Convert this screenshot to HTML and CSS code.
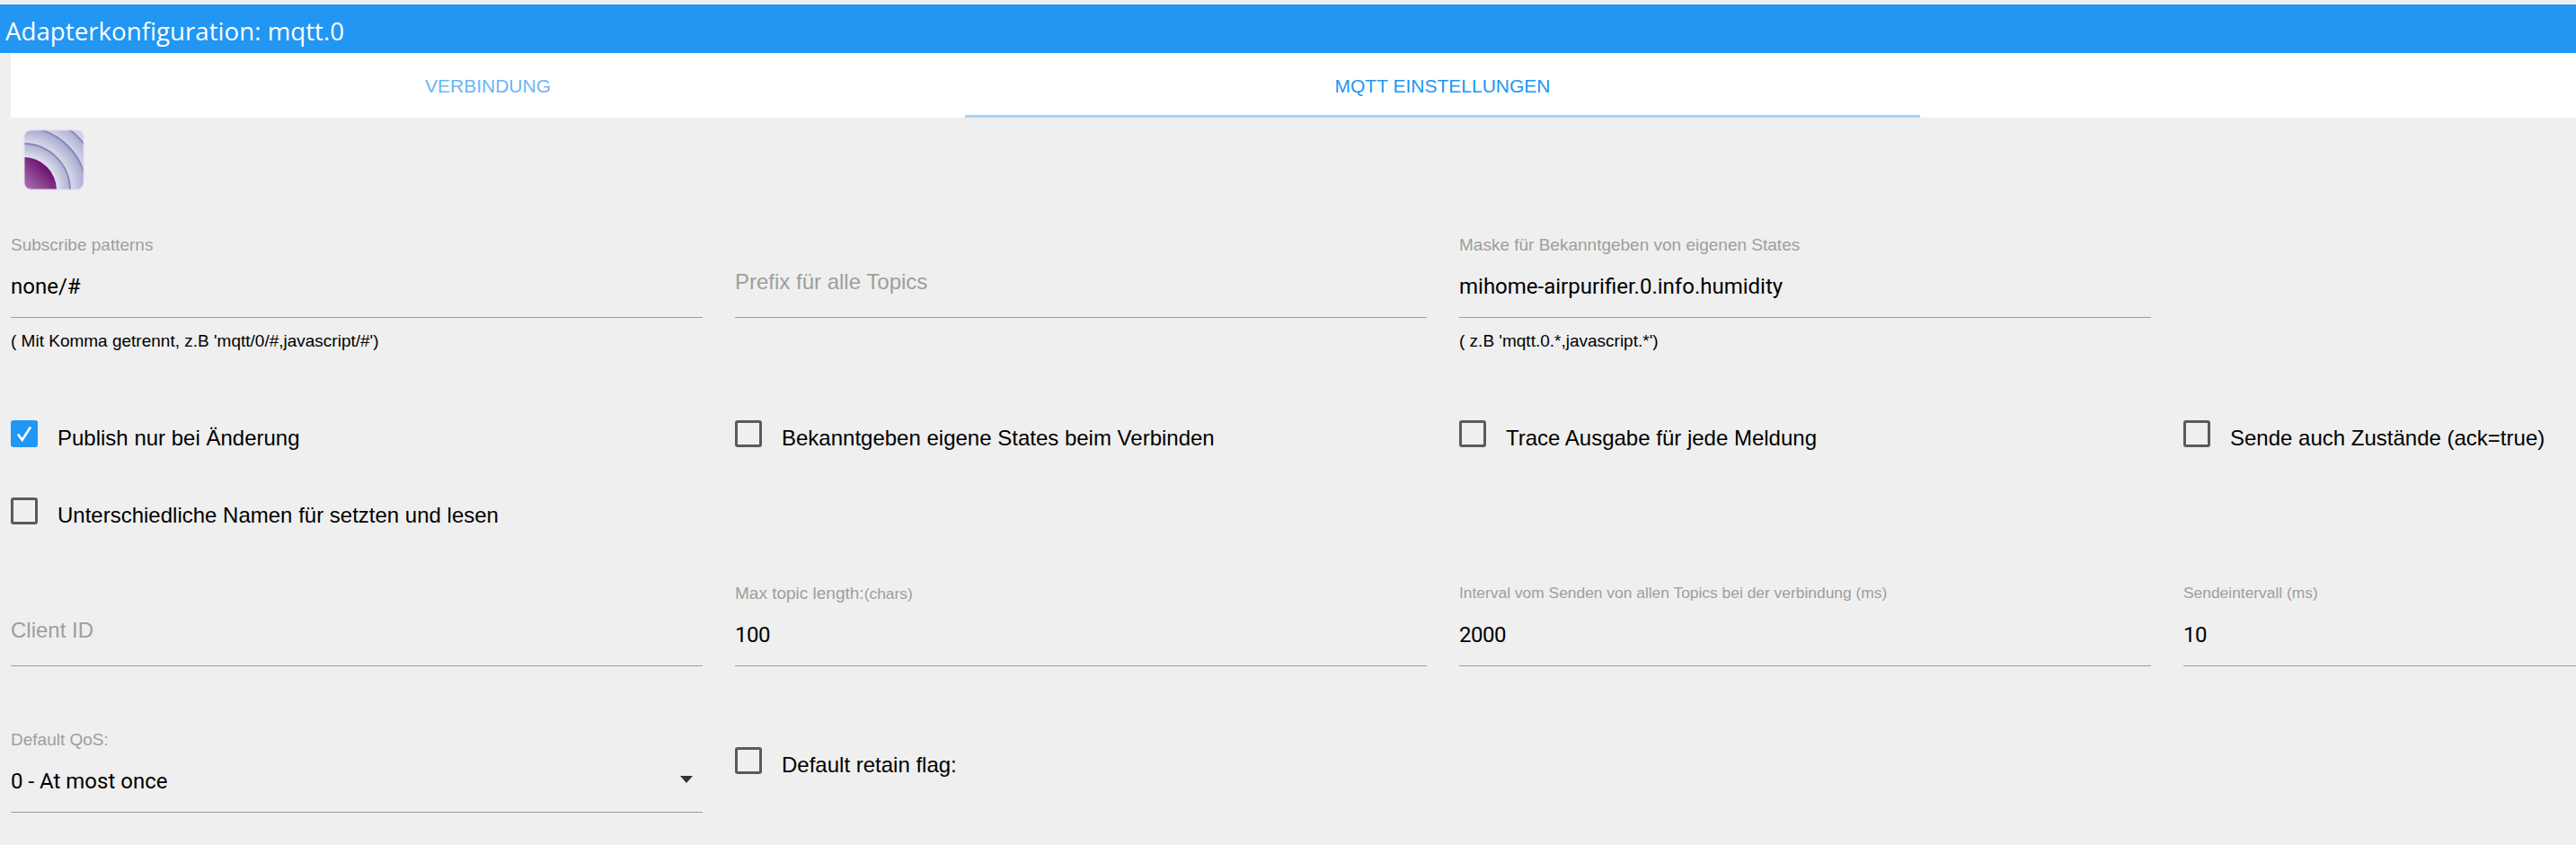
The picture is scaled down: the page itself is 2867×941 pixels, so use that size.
FILE: index.html
```html
<!DOCTYPE html>
<html lang="de">
<head>
<meta charset="utf-8">
<title>Adapterkonfiguration: mqtt.0</title>
<link rel="stylesheet" href="styles.css">
</head>
<body>
<header class="title">Adapterkonfiguration: mqtt.0</header>
<nav class="tabs">
  <div class="tab">VERBINDUNG</div>
  <div class="tab tab-active">MQTT EINSTELLUNGEN</div>
</nav>
<div class="logo-row">
  <svg class="logo" width="68" height="68" viewBox="0 0 68 68">
    <defs>
      <clipPath id="clip"><rect x="1.5" y="1.5" width="65" height="65" rx="7"/></clipPath>
      <radialGradient id="band" gradientUnits="userSpaceOnUse" cx="0" cy="68" r="100">
        <stop offset="0.37" stop-color="#e0e0ee"/>
        <stop offset="0.52" stop-color="#aeb1d2"/>
        <stop offset="0.53" stop-color="#d8d9ea"/>
        <stop offset="0.70" stop-color="#a4a8ce"/>
        <stop offset="0.71" stop-color="#d2d4e6"/>
        <stop offset="0.85" stop-color="#a9add0"/>
        <stop offset="0.86" stop-color="#d4d6e8"/>
        <stop offset="1" stop-color="#b8bbd8"/>
      </radialGradient>
      <linearGradient id="core" x1="0.5" y1="0.5" x2="0.85" y2="0.15">
        <stop offset="0" stop-color="#b07cb3"/>
        <stop offset="1" stop-color="#6a1170"/>
      </linearGradient>
    </defs>
    <rect x="0.75" y="0.75" width="66.5" height="66.5" rx="8" fill="#efe6f7" stroke="#eadcf6" stroke-width="1.5"/>
    <g clip-path="url(#clip)">
      <rect width="68" height="68" fill="url(#band)"/>
      <g fill="none" stroke="#8489b4" stroke-width="1.8">
        <circle cx="0" cy="68" r="52"/>
        <circle cx="0" cy="68" r="70"/>
        <circle cx="0" cy="68" r="85"/>
      </g>
      <circle cx="0" cy="68" r="37" fill="url(#core)"/>
    </g>
  </svg>
</div>

<section class="grid row-patterns">
  <div class="field">
    <label class="field-label">Subscribe patterns</label>
    <div class="input"><span class="value">none/#</span></div>
    <div class="hint">( Mit Komma getrennt, z.B 'mqtt/0/#,javascript/#')</div>
  </div>
  <div class="field">
    <label class="field-label"></label>
    <div class="input"><span class="placeholder">Prefix für alle Topics</span></div>
  </div>
  <div class="field">
    <label class="field-label">Maske für Bekanntgeben von eigenen States</label>
    <div class="input"><span class="value">mihome-airpurifier.0.info.humidity</span></div>
    <div class="hint">( z.B 'mqtt.0.*,javascript.*')</div>
  </div>
</section>

<section class="grid row-checks">
  <div class="check">
    <span class="box box-on"><svg width="30" height="30" viewBox="0 0 30 30"><path d="M8 15.5l4.7 6.5L22 7.5" fill="none" stroke="#fff" stroke-width="2.6"/></svg></span>
    <span class="check-label">Publish nur bei Änderung</span>
  </div>
  <div class="check"><span class="box"></span><span class="check-label">Bekanntgeben eigene States beim Verbinden</span></div>
  <div class="check"><span class="box"></span><span class="check-label">Trace Ausgabe für jede Meldung</span></div>
  <div class="check"><span class="box"></span><span class="check-label">Sende auch Zustände (ack=true)</span></div>
  <div class="check"><span class="box"></span><span class="check-label">Unterschiedliche Namen für setzten und lesen</span></div>
</section>

<section class="grid row-numbers">
  <div class="field">
    <label class="field-label"></label>
    <div class="input"><span class="placeholder">Client ID</span></div>
  </div>
  <div class="field">
    <label class="field-label">Max topic length:<span class="label-small">(chars)</span></label>
    <div class="input"><span class="value number">100</span></div>
  </div>
  <div class="field">
    <label class="field-label label-small">Interval vom Senden von allen Topics bei der verbindung (ms)</label>
    <div class="input"><span class="value number">2000</span></div>
  </div>
  <div class="field">
    <label class="field-label label-small">Sendeintervall (ms)</label>
    <div class="input"><span class="value number">10</span></div>
  </div>
</section>

<section class="grid row-qos">
  <div class="field">
    <label class="field-label">Default QoS:</label>
    <div class="input input-select"><span class="value">0 - At most once</span><span class="caret"></span></div>
  </div>
  <div class="check check-retain"><span class="box"></span><span class="check-label">Default retain flag:</span></div>
</section>
</body>
</html>
```
FILE: styles.css
```css
* { box-sizing: border-box; }
html, body { margin: 0; height: 941px; overflow: hidden; }
body {
  width: 2867px;
  padding-top: 5px;
  background: #efefef;
  font-family: "Liberation Sans", Arial, sans-serif;
  color: #000;
}
.title {
  height: 54px;
  padding-left: 6px;
  background: #2196f3;
  color: #fff;
  font: 27.7px/58px "Open Sans", sans-serif;
}
.tabs {
  display: flex;
  height: 72px;
  margin-left: 12px;
  background: #fff;
}
.tab {
  width: 1062px;
  height: 72px;
  line-height: 73px;
  text-align: center;
  font-size: 21px;
  color: #6cb5f5;
}
.tab-active {
  width: 1063px;
  color: #2196f3;
  border-bottom: 3px solid #a6d4fa;
}
.logo-row { height: 68px; margin: 13px 0 0 26px; }
.logo { display: block; }
.grid {
  display: grid;
  grid-template-columns: repeat(4, 770px);
  column-gap: 36px;
  width: 3224px;
  padding-left: 12px;
}
.row-patterns { margin-top: 47px; height: 142px; }
.row-checks { margin-top: 67px; row-gap: 56px; grid-auto-rows: 30px; }
.row-numbers { margin-top: 63px; }
.row-qos { margin-top: 68px; }
.field-label {
  display: block;
  height: 24px;
  font-size: 19px;
  line-height: 27px;
  color: #9e9e9e;
}
.label-small { font-size: 17.4px; }
.input {
  height: 71px;
  padding-top: 22px;
  border-bottom: 1px solid #9e9e9e;
  font: 24px/28px Roboto, sans-serif;
}
.value { display: block; }
.number { letter-spacing: -0.5px; }
.placeholder {
  display: block;
  margin-top: -5px;
  font-family: "Liberation Sans", sans-serif;
  font-size: 24px;
  color: #9e9e9e;
}
.hint { margin-top: 14px; font-size: 19px; line-height: 24px; }
.check { display: flex; gap: 22px; height: 30px; }
.box {
  flex: none;
  width: 30px;
  height: 30px;
  border: 3px solid #5a5a5a;
  border-radius: 3px;
}
.box-on { border: 0; background: #2196f3; }
.box-on svg { display: block; }
.check-label { font-size: 24px; line-height: 30px; padding-top: 5px; white-space: nowrap; }
.check-retain { margin-top: 22px; }
.input-select { position: relative; }
.caret {
  position: absolute;
  right: 11px;
  top: 30px;
  border: 7px solid transparent;
  border-top: 8px solid #333;
  border-bottom: 0;
}
```
